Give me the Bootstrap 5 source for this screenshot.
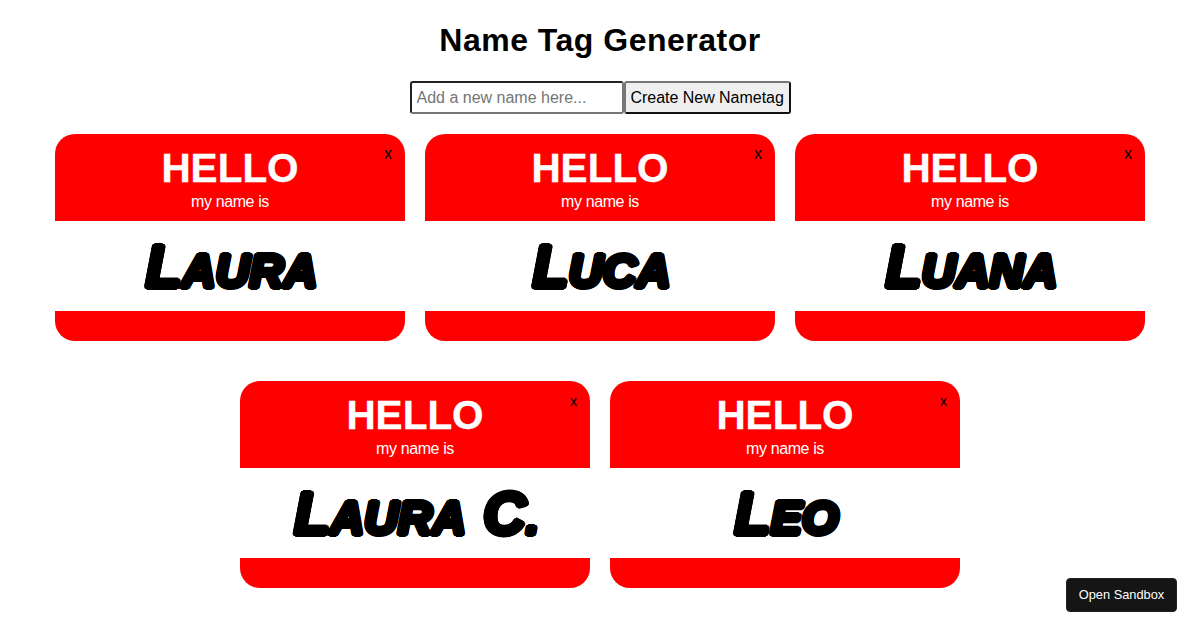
<!doctype html>
<html lang="en">
<head>
<meta charset="utf-8">
<title>Name Tag Generator</title>
<link href="https://cdn.jsdelivr.net/npm/bootstrap@5.3.0/dist/css/bootstrap.min.css" rel="stylesheet">
<style>
body{font-family:"Liberation Sans",Arial,sans-serif;color:#000;background:#fff;overflow:hidden}
.page-title{font-family:"Liberation Sans",Arial,sans-serif;font-size:32px;line-height:39px;font-weight:700;letter-spacing:.5px;margin:21px 0 21px}
.new-name{width:214px;height:33px;font-size:16px;padding:1px 5px;border:2px solid;border-color:#222 #767676 #767676 #222;border-radius:3px;color:#000}
.new-name::placeholder{color:#757575;opacity:1}
.create-btn{width:167px;height:33px;font-size:16px;padding:1px 5px;background:#efefef;color:#000;border:2px solid;border-color:#767676 #111 #111 #767676;border-radius:3px;white-space:nowrap;letter-spacing:-.03px}
.tag-wall{margin-top:20px;row-gap:40px;column-gap:20px}
.name-tag{width:350px;height:207px;background:#f00;border-radius:20px;overflow:hidden}
.tag-head{height:87px;color:#fff;padding-top:11px}
.tag-hello{font-size:40.5px;line-height:46px;font-weight:700;letter-spacing:0;-webkit-text-stroke:.3px #fff}
.tag-sub{font-size:16px;line-height:19px;margin-top:1px;letter-spacing:-.4px}
.tag-close{top:11px;right:13px;font-size:16px;line-height:18px;color:#000;background:none;border:0;padding:0}
.tag-close-sm{font-size:14px;right:13px}
.tag-name{height:90px;padding-left:3px;background:#fff;font-weight:700;font-style:italic;text-transform:uppercase;font-size:47px;line-height:92px;word-spacing:6px;white-space:nowrap;
text-shadow:2.6px 0 0 #000,-2.6px 0 0 #000,0 2.6px 0 #000,0 -2.6px 0 #000,1.8px 1.8px 0 #000,-1.8px 1.8px 0 #000,1.8px -1.8px 0 #000,-1.8px -1.8px 0 #000,2.4px 1px 0 #000,-2.4px 1px 0 #000,2.4px -1px 0 #000,-2.4px -1px 0 #000,1px 2.4px 0 #000,-1px 2.4px 0 #000,1px -2.4px 0 #000,-1px -2.4px 0 #000}
.name-cap{font-size:59px}
.sandbox-btn{right:23px;bottom:18px;width:111px;height:34px;background:#151515;color:#fff;border:1px solid #222;border-radius:4px;font-size:12.8px;line-height:1;padding:0}
</style>
</head>
<body>
<div class="text-center">
  <h1 class="page-title">Name Tag Generator</h1>
  <div class="d-flex justify-content-center">
    <input class="new-name" type="text" placeholder="Add a new name here..." aria-label="Add a new name">
    <button class="create-btn" type="button">Create New Nametag</button>
  </div>
  <div class="tag-wall d-flex flex-wrap justify-content-center">
    <div class="name-tag position-relative"><button class="tag-close position-absolute" type="button">x</button><div class="tag-head"><div class="tag-hello">HELLO</div><div class="tag-sub">my name is</div></div><div class="tag-name"><span class="name-cap">L</span>aura</div></div>
    <div class="name-tag position-relative"><button class="tag-close position-absolute" type="button">x</button><div class="tag-head"><div class="tag-hello">HELLO</div><div class="tag-sub">my name is</div></div><div class="tag-name"><span class="name-cap">L</span>uca</div></div>
    <div class="name-tag position-relative"><button class="tag-close position-absolute" type="button">x</button><div class="tag-head"><div class="tag-hello">HELLO</div><div class="tag-sub">my name is</div></div><div class="tag-name"><span class="name-cap">L</span>uana</div></div>
    <div class="name-tag position-relative"><button class="tag-close tag-close-sm position-absolute" type="button">x</button><div class="tag-head"><div class="tag-hello">HELLO</div><div class="tag-sub">my name is</div></div><div class="tag-name"><span class="name-cap">L</span>aura <span class="name-cap">C</span>.</div></div>
    <div class="name-tag position-relative"><button class="tag-close tag-close-sm position-absolute" type="button">x</button><div class="tag-head"><div class="tag-hello">HELLO</div><div class="tag-sub">my name is</div></div><div class="tag-name"><span class="name-cap">L</span>eo</div></div>
  </div>
</div>
<button class="sandbox-btn position-fixed" type="button">Open Sandbox</button>
<script src="https://cdn.jsdelivr.net/npm/bootstrap@5.3.0/dist/js/bootstrap.bundle.min.js"></script>
</body>
</html>
